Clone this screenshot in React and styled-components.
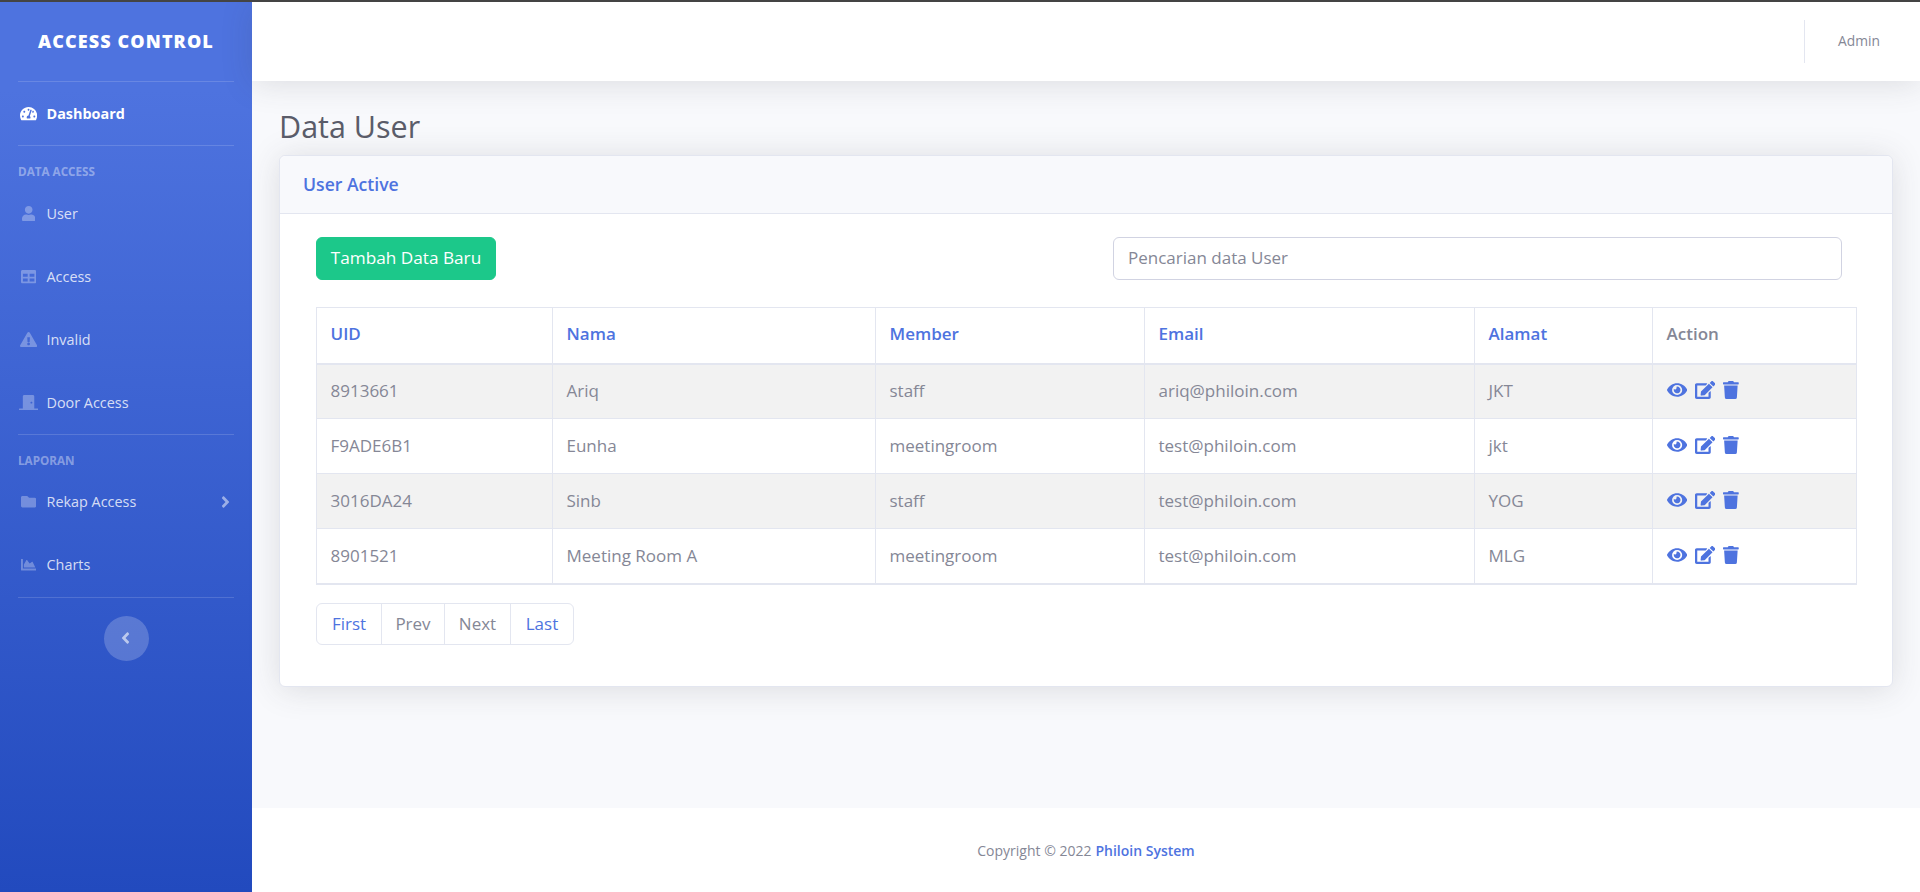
import React from "react";
import styled, { createGlobalStyle } from "styled-components";
import {
  FaTachometerAlt,
  FaUser,
  FaTable,
  FaExclamationTriangle,
  FaDoorClosed,
  FaFolder,
  FaChartArea,
  FaAngleRight,
  FaAngleLeft,
  FaEye,
  FaEdit,
  FaTrash,
} from "react-icons/fa";

const GlobalStyle = createGlobalStyle`
  * { box-sizing: border-box; }
  html, body { margin: 0; padding: 0; }
  body {
    font-family: "Open Sans", "Liberation Sans", sans-serif;
    font-size: 18px;
    line-height: 1.5;
    color: #858796;
    background: #f8f9fc;
  }
`;

const Page = styled.div`
  display: flex;
  height: 892px;
  overflow: hidden;
  border-top: 2px solid #444;
`;

const Sidebar = styled.aside`
  width: 252px;
  flex-shrink: 0;
  padding: 0 18px;
  background: linear-gradient(180deg, #4e73df 10%, #224abe 100%);
`;

const Brand = styled.div`
  height: 79px;
  display: flex;
  align-items: center;
  justify-content: center;
  color: #fff;
  font-weight: 800;
  font-size: 18px;
  letter-spacing: 1.1px;
  text-transform: uppercase;
  white-space: nowrap;
`;

const Divider = styled.hr`
  margin: 0;
  border: 0;
  border-top: 1px solid rgba(255, 255, 255, 0.15);
`;

const Heading = styled.div`
  margin-top: 17px;
  padding-bottom: ${(p) => p.$gap}px;
  font-size: 11.7px;
  font-weight: 700;
  line-height: 17.5px;
  text-transform: uppercase;
  color: rgba(255, 255, 255, 0.4);
`;

const NavLink = styled.a`
  display: flex;
  align-items: center;
  height: 63px;
  font-size: 14.4px;
  font-weight: ${(p) => (p.$active ? 700 : 400)};
  color: ${(p) => (p.$active ? "#fff" : "rgba(255, 255, 255, 0.8)")};
`;

const NavIcon = styled.span`
  display: flex;
  justify-content: center;
  width: 21px;
  margin-right: 7.5px;
  flex-shrink: 0;
  color: ${(p) => (p.$active ? "#fff" : "rgba(255, 255, 255, 0.3)")};
  svg {
    height: 15.3px;
    width: ${(p) => p.$width}px;
  }
`;

const Caret = styled.span`
  display: flex;
  margin-left: auto;
  margin-right: 4px;
  color: rgba(255, 255, 255, 0.5);
  svg {
    height: 18px;
    width: 9px;
  }
`;

const ToggleRow = styled.div`
  display: flex;
  justify-content: center;
  margin-top: 18px;
`;

const Toggle = styled.button`
  width: 45px;
  height: 45px;
  display: flex;
  align-items: center;
  justify-content: center;
  padding: 0 2px 0 0;
  border: 0;
  border-radius: 50%;
  color: rgba(255, 255, 255, 0.6);
  background: rgba(255, 255, 255, 0.2);
  svg {
    height: 18px;
    width: 9px;
  }
`;

const Main = styled.div`
  flex: 1;
  min-width: 0;
  display: flex;
  flex-direction: column;
`;

const Topbar = styled.header`
  height: 79px;
  flex-shrink: 0;
  display: flex;
  align-items: center;
  justify-content: flex-end;
  background: #fff;
  box-shadow: 0 2.7px 31.5px 0 rgba(58, 59, 69, 0.15);
`;

const UserBox = styled.div`
  height: 43px;
  display: flex;
  align-items: center;
  padding: 0 40px 0 33px;
  border-left: 1px solid #e3e6f0;
  font-size: 13.8px;
`;

const Content = styled.main`
  flex: 1;
  padding: 26px 27px 0;
`;

const Title = styled.h1`
  margin: 0 0 10px;
  font-size: 30.5px;
  font-weight: 400;
  line-height: 38px;
  color: #5a5c69;
`;

const Card = styled.section`
  height: 532px;
  border: 1px solid #e3e6f0;
  border-radius: 6px;
  background: #fff;
  box-shadow: 0 2.7px 31.5px 0 rgba(58, 59, 69, 0.15);
`;

const CardHeader = styled.div`
  height: 58px;
  display: flex;
  align-items: center;
  padding: 0 23px;
  border-bottom: 1px solid #e3e6f0;
  border-radius: 6px 6px 0 0;
  background: #f8f9fc;
  font-size: 17.6px;
  font-weight: 600;
  color: #4e73df;
`;

const CardBody = styled.div`
  padding: 23px 36px 0;
`;

const Toolbar = styled.div`
  display: flex;
  justify-content: space-between;
  padding-right: 14px;
  margin-bottom: 27px;
`;

const AddButton = styled.button`
  width: 180px;
  height: 43px;
  padding: 0 0 2px;
  border: 1px solid #1cc88a;
  border-radius: 6px;
  background: #1cc88a;
  color: #fff;
  font-family: inherit;
  font-size: 17.2px;
`;

const SearchInput = styled.input`
  width: 729px;
  height: 43px;
  padding: 0 14px 2px;
  border: 1px solid #d1d3e2;
  border-radius: 6px;
  font-family: inherit;
  font-size: 17px;
  color: #6e707e;
  &::placeholder {
    color: #858796;
  }
`;

const Table = styled.table`
  width: 100%;
  table-layout: fixed;
  border-collapse: collapse;
  border: 1px solid #e3e6f0;
  border-bottom-width: 2px;
  margin-bottom: 18px;
`;

const Th = styled.th`
  height: 56px;
  padding: 0 13.5px 4px;
  text-align: left;
  font-size: 17px;
  font-weight: 600;
  color: ${(p) => (p.$plain ? "#858796" : "#4e73df")};
  border: 1px solid #e3e6f0;
  border-bottom-width: 2px;
`;

const Td = styled.td`
  height: 55px;
  padding: 0 13.5px 1px;
  font-size: 17px;
  border: 1px solid #e3e6f0;
`;

const Row = styled.tr`
  background: ${(p) => (p.$striped ? "#f2f2f2" : "#fff")};
`;

const Actions = styled.div`
  display: flex;
  align-items: center;
  gap: 8px;
  padding-bottom: 1px;
  color: #4e73df;
  svg {
    display: block;
    height: 18px;
    width: 20.25px;
  }
  svg:last-child {
    width: 15.75px;
  }
`;

const Pager = styled.nav`
  display: inline-flex;
  height: 42px;
  border: 1px solid #e3e6f0;
  border-radius: 6px;
`;

const PageLink = styled.a`
  display: flex;
  align-items: center;
  justify-content: center;
  width: ${(p) => p.$width}px;
  font-size: 17px;
  color: ${(p) => (p.$active ? "#4e73df" : "#858796")};
  & + & {
    border-left: 1px solid #e3e6f0;
  }
`;

const Footer = styled.footer`
  height: 84px;
  flex-shrink: 0;
  display: flex;
  align-items: center;
  justify-content: center;
  padding-top: 1px;
  background: #fff;
  font-size: 14px;
  b {
    margin-left: 4px;
    font-weight: 600;
    color: #4e73df;
  }
`;

const columns = [
  { label: "UID", width: 236 },
  { label: "Nama", width: 323 },
  { label: "Member", width: 269 },
  { label: "Email", width: 330 },
  { label: "Alamat", width: 178 },
  { label: "Action", width: 204, plain: true },
];

const users = [
  { uid: "8913661", nama: "Ariq", member: "staff", email: "ariq@philoin.com", alamat: "JKT" },
  { uid: "F9ADE6B1", nama: "Eunha", member: "meetingroom", email: "test@philoin.com", alamat: "jkt" },
  { uid: "3016DA24", nama: "Sinb", member: "staff", email: "test@philoin.com", alamat: "YOG" },
  { uid: "8901521", nama: "Meeting Room A", member: "meetingroom", email: "test@philoin.com", alamat: "MLG" },
];

const pages = [
  { label: "First", width: 64, active: true },
  { label: "Prev", width: 63 },
  { label: "Next", width: 66 },
  { label: "Last", width: 63, active: true },
];

// fixed svg widths, react-icons forces a square box otherwise
const NavItem = ({ icon, width, label, active, caret }) => (
  <NavLink $active={active}>
    <NavIcon $active={active} $width={width}>
      {icon}
    </NavIcon>
    {label}
    {caret && (
      <Caret>
        <FaAngleRight />
      </Caret>
    )}
  </NavLink>
);

const App = () => (
  <Page>
    <GlobalStyle />
    <Sidebar>
      <Brand>Access Control</Brand>
      <Divider />
      <NavItem icon={<FaTachometerAlt />} width={17.2} label="Dashboard" active />
      <Divider />
      <Heading $gap={1.5}>Data Access</Heading>
      <NavItem icon={<FaUser />} width={13.4} label="User" />
      <NavItem icon={<FaTable />} width={15.3} label="Access" />
      <NavItem icon={<FaExclamationTriangle />} width={17.2} label="Invalid" />
      <NavItem icon={<FaDoorClosed />} width={19.1} label="Door Access" />
      <Divider />
      <Heading $gap={1}>Laporan</Heading>
      <NavItem icon={<FaFolder />} width={15.3} label="Rekap Access" caret />
      <NavItem icon={<FaChartArea />} width={15.3} label="Charts" />
      <Divider />
      <ToggleRow>
        <Toggle>
          <FaAngleLeft />
        </Toggle>
      </ToggleRow>
    </Sidebar>
    <Main>
      <Topbar>
        <UserBox>Admin</UserBox>
      </Topbar>
      <Content>
        <Title>Data User</Title>
        <Card>
          <CardHeader>User Active</CardHeader>
          <CardBody>
            <Toolbar>
              <AddButton>Tambah Data Baru</AddButton>
              <SearchInput placeholder="Pencarian data User" />
            </Toolbar>
            <Table>
              <colgroup>
                {columns.map((c) => (
                  <col key={c.label} style={{ width: c.width }} />
                ))}
              </colgroup>
              <thead>
                <tr>
                  {columns.map((c) => (
                    <Th key={c.label} $plain={c.plain}>
                      {c.label}
                    </Th>
                  ))}
                </tr>
              </thead>
              <tbody>
                {users.map((u, i) => (
                  <Row key={u.uid} $striped={i % 2 === 0}>
                    <Td>{u.uid}</Td>
                    <Td>{u.nama}</Td>
                    <Td>{u.member}</Td>
                    <Td>{u.email}</Td>
                    <Td>{u.alamat}</Td>
                    <Td>
                      <Actions>
                        <FaEye />
                        <FaEdit />
                        <FaTrash />
                      </Actions>
                    </Td>
                  </Row>
                ))}
              </tbody>
            </Table>
            <Pager>
              {pages.map((p) => (
                <PageLink key={p.label} $width={p.width} $active={p.active}>
                  {p.label}
                </PageLink>
              ))}
            </Pager>
          </CardBody>
        </Card>
      </Content>
      <Footer>
        Copyright © 2022 <b>Philoin System</b>
      </Footer>
    </Main>
  </Page>
);

export default App;
